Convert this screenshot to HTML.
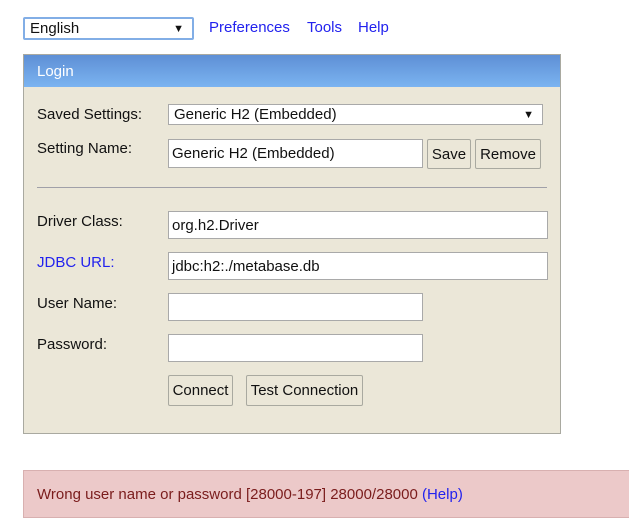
<!DOCTYPE html>
<html><head><meta charset="utf-8"><style>
*{box-sizing:border-box;margin:0;padding:0}
body{width:629px;height:529px;background:#fff;font-family:"Liberation Sans",Arial,sans-serif;font-size:15px;color:#111;position:relative;overflow:hidden}
.a{position:absolute;white-space:nowrap}
.in{position:absolute;background:#fff;border:1px solid #a9a9a9;padding-left:3px;display:flex;align-items:center}
.btn{position:absolute;background:#ebe7d8;border:1px solid #a9a9a0;border-radius:2px;display:flex;align-items:center;justify-content:center}
.lnk{color:#2222ee}
.arr{position:absolute;right:8px;font-size:11px}
</style></head><body>
<div class="in" style="left:23px;top:17px;width:171px;height:23px;border:2px solid #82aee6;border-radius:2px;padding-left:5px">English<span class="arr">▼</span></div>
<div class="a lnk" style="left:209px;top:19px">Preferences</div>
<div class="a lnk" style="left:307px;top:19px">Tools</div>
<div class="a lnk" style="left:358px;top:19px">Help</div>

<div class="a" style="left:23px;top:54px;width:538px;height:380px;background:#ebe7d8;border:1px solid #a9a9a0"></div>
<div class="a" style="left:24px;top:55px;width:536px;height:32px;background:linear-gradient(#5e8fd5,#7bb4f1);color:#fff;padding:8px 13px">Login</div>

<div class="a" style="left:37px;top:106px">Saved Settings:</div>
<div class="in" style="left:168px;top:104px;width:375px;height:21px;padding-left:5px">Generic H2 (Embedded)<span class="arr">▼</span></div>
<div class="a" style="left:37px;top:140px">Setting Name:</div>
<div class="in" style="left:168px;top:139px;width:255px;height:29px">Generic H2 (Embedded)</div>
<div class="btn" style="left:427px;top:139px;width:44px;height:30px">Save</div>
<div class="btn" style="left:475px;top:139px;width:66px;height:30px">Remove</div>
<div class="a" style="left:37px;top:187px;width:510px;height:1px;background:#a0a0a8"></div>

<div class="a" style="left:37px;top:213px">Driver Class:</div>
<div class="in" style="left:168px;top:211px;width:380px;height:28px">org.h2.Driver</div>
<div class="a lnk" style="left:37px;top:254px">JDBC URL:</div>
<div class="in" style="left:168px;top:252px;width:380px;height:28px">jdbc:h2:./metabase.db</div>
<div class="a" style="left:37px;top:295px">User Name:</div>
<div class="in" style="left:168px;top:293px;width:255px;height:28px"></div>
<div class="a" style="left:37px;top:336px">Password:</div>
<div class="in" style="left:168px;top:334px;width:255px;height:28px"></div>
<div class="btn" style="left:168px;top:375px;width:65px;height:31px">Connect</div>
<div class="btn" style="left:246px;top:375px;width:117px;height:31px">Test Connection</div>

<div class="a" style="left:23px;top:470px;width:620px;height:48px;background:#ecc9c9;border:1px solid #d8b0b0;color:#7a1c1c;padding:15px 13px">Wrong user name or password [28000-197] 28000/28000 <span class="lnk">(Help)</span></div>
</body></html>
